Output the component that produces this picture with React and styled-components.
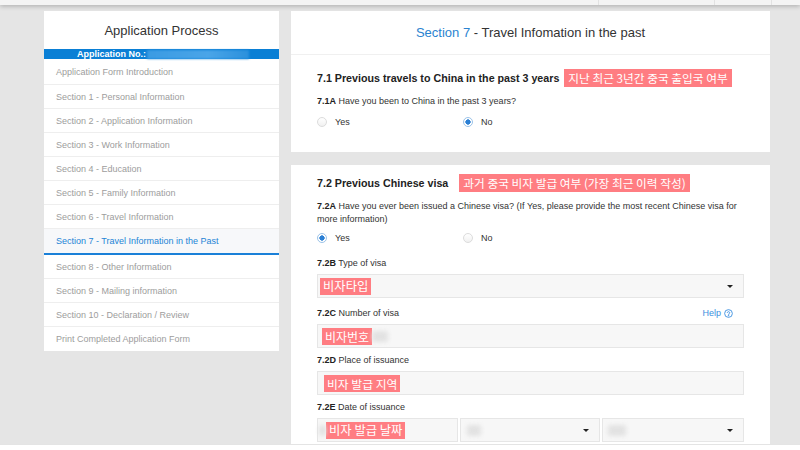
import React from "react";
import styled, { createGlobalStyle } from "styled-components";

const GlobalStyle = createGlobalStyle`
  html, body { margin: 0; padding: 0; }
  body {
    background: #e5e5e5;
    font-family: "Liberation Sans", Arial, "Noto Sans CJK KR", sans-serif;
    overflow: hidden;
  }
  * { box-sizing: border-box; }
`;

const Page = styled.div`
  height: 450px;
  display: flex;
  flex-direction: column;
`;

const TopBar = styled.div`
  height: 5px;
  flex-shrink: 0;
  background: #f4f4f4;
  position: relative;
  z-index: 2;
  box-shadow: 0 1px 5px rgba(0, 0, 0, 0.28);
  display: flex;
`;

const TopSeg = styled.div`
  height: 100%;
  flex: ${(p) => (p.$w ? `0 0 ${p.$w}px` : "1")};
  border-left: ${(p) => (p.$w ? "1px solid #e2e2e2" : "none")};
`;

const Content = styled.div`
  flex: 1;
  display: flex;
  align-items: flex-start;
  gap: 12px;
  padding: 6px 0 0 44px;
  overflow: hidden;
`;

const Sidebar = styled.nav`
  width: 235px;
  flex-shrink: 0;
  background: #fff;
`;

const SidebarTitle = styled.div`
  height: 38px;
  display: flex;
  align-items: center;
  justify-content: center;
  font-size: 13px;
  color: #333;
`;

const AppNoBar = styled.div`
  height: 10px;
  background: #0a7fd5;
  color: #fff;
  font-weight: bold;
  font-size: 9px;
  padding-left: 33px;
  display: flex;
  align-items: center;
`;

const AppNoBlur = styled.span`
  display: inline-block;
  width: 102px;
  height: 9px;
  margin-left: 1px;
  background: linear-gradient(90deg, #3a9be3, #4aa5e8 60%, #2a90dc);
  filter: blur(1px);
`;

const NavItem = styled.div`
  height: ${(p) => (p.$active ? 26 : p.$tall ? 26 : 24)}px;
  display: flex;
  align-items: center;
  padding-left: 12px;
  font-size: 9px;
  color: ${(p) => (p.$active ? "#2384d6" : "#9d9d9d")};
  background: ${(p) => (p.$active ? "#f7f8fa" : "#fff")};
  border-bottom: ${(p) =>
    p.$active ? "2px solid #1a80d8" : p.$last ? "none" : "1px solid #eeeeee"};
`;

const Main = styled.main`
  width: 479px;
  flex-shrink: 0;
  display: flex;
  flex-direction: column;
  gap: 13px;
`;

const Card = styled.section`
  background: #fff;
`;

const CardHeader = styled.div`
  height: 44px;
  display: flex;
  align-items: center;
  justify-content: center;
  border-bottom: 1px solid #f0f0f0;
  font-size: 13px;
  color: #333;
`;

const Blue = styled.span`
  color: #2a83d0;
`;

const CardBody = styled.div`
  padding: ${(p) => p.$pt}px 26px ${(p) => p.$pb}px;
  display: flex;
  flex-direction: column;
`;

const Heading = styled.div`
  display: flex;
  align-items: center;
  height: 18px;
  font-size: 10.7px;
  font-weight: bold;
  color: #222;
`;

const Highlight = styled.span`
  display: inline-block;
  margin-left: ${(p) => p.$ml || 0}px;
  padding: 0 ${(p) => p.$px || 4}px;
  line-height: ${(p) => p.$lh || 18}px;
  font-size: ${(p) => p.$fs || 11.7}px;
  font-weight: normal;
  font-family: "Noto Sans CJK KR", "Liberation Sans", sans-serif;
  background: #ff7d82;
  color: #fff;
`;

const Question = styled.div`
  margin-top: ${(p) => p.$mt}px;
  font-size: 9px;
  line-height: 13px;
  color: #333;
  b {
    color: #222;
  }
`;

const LabelRow = styled(Question)`
  display: flex;
  justify-content: space-between;
  padding-right: 11px;
`;

const HelpLink = styled.span`
  display: flex;
  align-items: center;
  gap: 3px;
  color: #3b8fe0;
`;

const RadioRow = styled.div`
  margin-top: ${(p) => p.$mt}px;
  height: 14px;
  display: flex;
  align-items: center;
`;

const RadioOption = styled.label`
  width: 146px;
  display: flex;
  align-items: center;
  gap: 8px;
  font-size: 9px;
  color: #333;
`;

const RadioDot = styled.span`
  width: 10px;
  height: 10px;
  border-radius: 50%;
  border: 1px solid ${(p) => (p.$checked ? "#9cc3e8" : "#dcdcdc")};
  background: ${(p) =>
    p.$checked
      ? "radial-gradient(circle, #2a7fd4 0 2.4px, #fff 2.9px)"
      : "linear-gradient(#fff, #f1f1f1)"};
`;

const Box = styled.div`
  margin-top: ${(p) => p.$mt || 0}px;
  height: 24px;
  border: 1px solid #e6e6e6;
  background: #f7f7f7;
  display: flex;
  align-items: center;
  justify-content: space-between;
  padding-left: ${(p) => p.$pl || 2}px;
  padding-right: 10px;
`;

const BoxLeft = styled.span`
  display: flex;
  align-items: center;
`;

const Smudge = styled.span`
  display: inline-block;
  width: ${(p) => p.$w}px;
  height: 11px;
  margin-left: ${(p) => p.$ml || 0}px;
  background: #e2e2e2;
  border-radius: 3px;
  filter: blur(2px);
`;

const Caret = styled.span`
  width: 0;
  height: 0;
  border-left: 3px solid transparent;
  border-right: 3px solid transparent;
  border-top: 3.5px solid #222;
`;

const DateRow = styled.div`
  margin-top: 4px;
  display: grid;
  grid-template-columns: 141px 140px 1fr;
  gap: 2px;
`;

const Footer = styled.div`
  height: 6px;
  flex-shrink: 0;
  background: #fff;
  border-top: 1px solid #e4e4e4;
`;

const HelpIcon = () => (
  <svg width="9" height="9" viewBox="0 0 10 10" fill="none" stroke="#3b8fe0" strokeWidth="1">
    <circle cx="5" cy="5" r="4.3" />
    <path d="M3.6 3.9a1.45 1.45 0 0 1 2.8.3c0 .9-1.4 1.1-1.4 2" strokeLinecap="round" />
    <circle cx="5" cy="7.5" r="0.35" fill="#3b8fe0" />
  </svg>
);

const navItems = [
  "Section 1 - Personal Information",
  "Section 2 - Application Information",
  "Section 3 - Work Information",
  "Section 4 - Education",
  "Section 5 - Family Information",
  "Section 6 - Travel Information",
  "Section 7 - Travel Information in the Past",
  "Section 8 - Other Information",
  "Section 9 - Mailing information",
  "Section 10 - Declaration / Review",
];

const Radios = ({ checked, mt }) => (
  <RadioRow $mt={mt}>
    <RadioOption>
      <RadioDot $checked={checked === "yes"} />
      Yes
    </RadioOption>
    <RadioOption>
      <RadioDot $checked={checked === "no"} />
      No
    </RadioOption>
  </RadioRow>
);

export default function App() {
  return (
    <Page>
      <GlobalStyle />
      <TopBar>
        <TopSeg />
        <TopSeg $w={116} />
        <TopSeg $w={57} />
        <TopSeg $w={29} />
      </TopBar>
      <Content>
        <Sidebar>
          <SidebarTitle>Application Process</SidebarTitle>
          <AppNoBar>
            Application No.:
            <AppNoBlur />
          </AppNoBar>
          <NavItem $tall>Application Form Introduction</NavItem>
          {navItems.map((t) => (
            <NavItem key={t} $active={t.startsWith("Section 7")}>
              {t}
            </NavItem>
          ))}
          <NavItem $last>Print Completed Application Form</NavItem>
        </Sidebar>
        <Main>
          <Card>
            <CardHeader>
              <Blue>Section 7</Blue>&nbsp;- Travel Infomation in the past
            </CardHeader>
            <CardBody $pt={14} $pb={23}>
              <Heading>
                7.1 Previous travels to China in the past 3 years
                <Highlight $ml={5}>지난 최근 3년간 중국 출입국 여부</Highlight>
              </Heading>
              <Question $mt={8}>
                <b>7.1A</b> Have you been to China in the past 3 years?
              </Question>
              <Radios checked="no" mt={7} />
            </CardBody>
          </Card>
          <Card>
            <CardBody $pt={9} $pb={20}>
              <Heading>
                7.2 Previous Chinese visa
                <Highlight $ml={11}>과거 중국 비자 발급 여부 (가장 최근 이력 작성)</Highlight>
              </Heading>
              <Question $mt={8}>
                <b>7.2A</b> Have you ever been issued a Chinese visa? (If Yes, please provide the most
                recent Chinese visa for more information)
              </Question>
              <Radios checked="yes" mt={5} />

              <LabelRow $mt={12}>
                <span>
                  <b>7.2B</b> Type of visa
                </span>
              </LabelRow>
              <Box $mt={4}>
                <Highlight $fs={12.3} $lh={17} $px={3}>비자타입</Highlight>
                <Caret />
              </Box>

              <LabelRow $mt={9}>
                <span>
                  <b>7.2C</b> Number of visa
                </span>
                <HelpLink>
                  Help <HelpIcon />
                </HelpLink>
              </LabelRow>
              <Box $mt={4} $pl={4}>
                <BoxLeft>
                  <Highlight $fs={12} $lh={17} $px={3}>비자번호</Highlight>
                  <Smudge $w={16} />
                </BoxLeft>
              </Box>

              <LabelRow $mt={6}>
                <span>
                  <b>7.2D</b> Place of issuance
                </span>
              </LabelRow>
              <Box $mt={4} $pl={6}>
                <Highlight $fs={11.8} $lh={17} $px={3}>비자 발급 지역</Highlight>
              </Box>

              <LabelRow $mt={6}>
                <span>
                  <b>7.2E</b> Date of issuance
                </span>
              </LabelRow>
              <DateRow>
                <Box $pl={1}>
                  <BoxLeft>
                    <Smudge $w={7} />
                    <Highlight $fs={12.3} $lh={17} $px={3}>비자 발급 날짜</Highlight>
                  </BoxLeft>
                </Box>
                <Box $pl={6}>
                  <Smudge $w={14} />
                  <Caret />
                </Box>
                <Box $pl={5}>
                  <Smudge $w={18} />
                  <Caret />
                </Box>
              </DateRow>
            </CardBody>
          </Card>
        </Main>
      </Content>
      <Footer />
    </Page>
  );
}
